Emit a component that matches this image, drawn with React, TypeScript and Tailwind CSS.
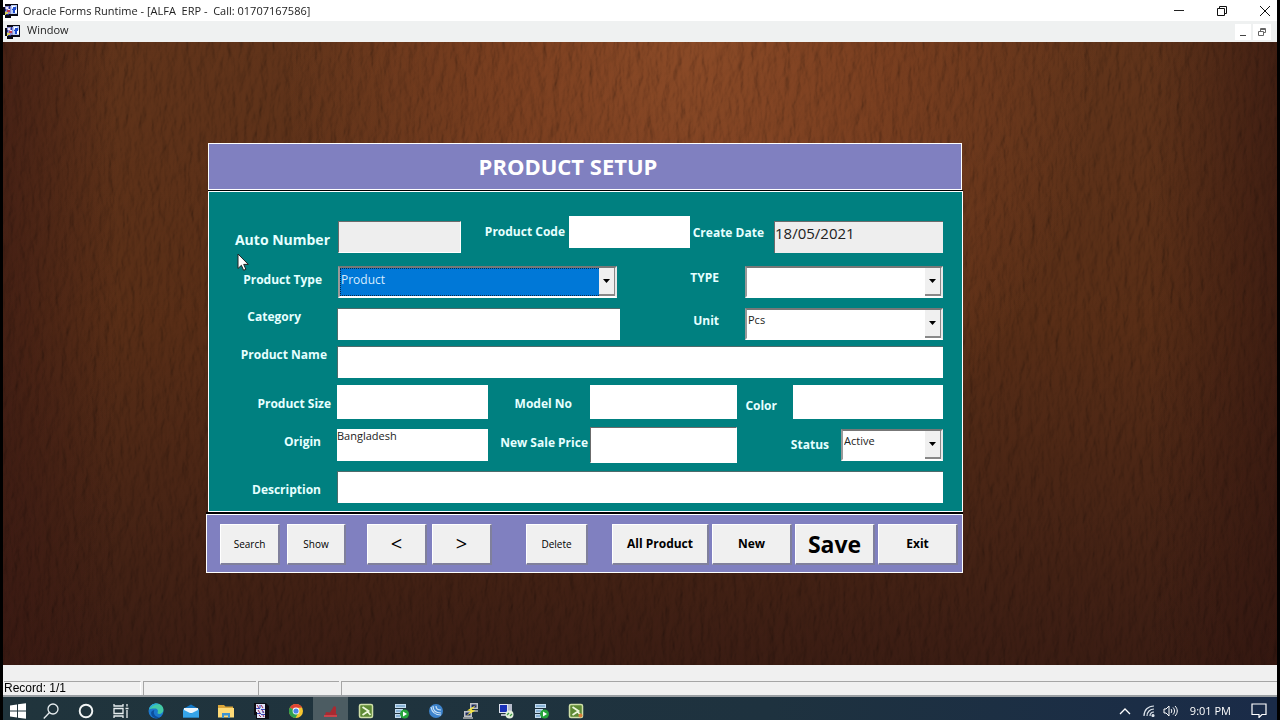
import React, { useState } from 'react';

const sunken = 'border border-t-[#6b6b6b] border-l-[#6b6b6b] border-b-white border-r-white';
const labelText = 'text-[12px] leading-[18px] font-bold text-[#e6ffff] whitespace-nowrap text-right shrink-0';

type FieldProps = {
  id: string;
  label: string;
  labelClass: string;
  inputClass: string;
  className?: string;
  value?: string;
  readOnly?: boolean;
};

function Field({ id, label, labelClass, inputClass, className = 'items-center', value = '', readOnly }: FieldProps) {
  const [text, setText] = useState(value);
  return (
    <div className={`flex ${className}`}>
      <label htmlFor={id} className={`${labelText} ${labelClass}`}>
        {label}
      </label>
      <input
        id={id}
        type="text"
        value={text}
        readOnly={readOnly}
        onChange={(e) => setText(e.target.value)}
        className={`min-w-0 rounded-none text-[#222] outline-none ${inputClass}`}
      />
    </div>
  );
}

type SelectFieldProps = {
  id: string;
  label: string;
  labelClass: string;
  boxClass: string;
  className?: string;
  options: string[];
  highlighted?: boolean;
};

function SelectField({ id, label, labelClass, boxClass, className = 'items-center', options, highlighted }: SelectFieldProps) {
  const [selected, setSelected] = useState(options[0]);
  return (
    <div className={`flex ${className}`}>
      <label htmlFor={id} className={`${labelText} ${labelClass}`}>
        {label}
      </label>
      <div className={`relative border-2 border-t-[#777] border-l-[#999] border-b-white border-r-[#e8e8e8] bg-white ${boxClass}`}>
        <select
          id={id}
          value={selected}
          onChange={(e) => setSelected(e.target.value)}
          className={`block h-full w-full appearance-none rounded-none outline-none ${
            highlighted
              ? 'border border-dotted border-[#0b2a4a] bg-[#0078d7] pb-1 text-[12px] text-[#d6ecff]'
              : 'bg-white pl-px pb-2 text-[11px] text-[#222]'
          }`}
        >
          {options.map((option) => (
            <option key={option} value={option}>
              {option}
            </option>
          ))}
        </select>
        <span className="pointer-events-none absolute top-0 right-0 bottom-0 flex w-4 items-center justify-center border-r border-b-2 border-[#888] bg-[#f0f0f0]">
          <svg viewBox="0 0 7 4" className="h-1 w-[7px]">
            <path d="M0 0h7L3.500 4z" fill="#000" />
          </svg>
        </span>
      </div>
    </div>
  );
}

function FormButton({ children, className }: { children: React.ReactNode; className: string }) {
  return (
    <button
      type="button"
      className={`h-[41px] shrink-0 border border-t-white border-l-white border-b-2 border-r-2 border-b-[#80809c] border-r-[#80809c] bg-[#f0f0f0] whitespace-nowrap text-black ${className}`}
    >
      {children}
    </button>
  );
}

function FormsIcon() {
  return (
    <svg viewBox="0 0 16 16" className="h-4 w-4 shrink-0">
      <path d="M2 1h13v12H8v2H2v-3H0V4h2z" fill="#090914" />
      <path d="M2 3h6v8H2z" fill="#8d8fcf" />
      <path d="M8 2h6v9H8z" fill="#b9cdf8" />
      <path d="M9 3h3v2H9zM12 6h2v4h-2z" fill="#fff" />
      <path d="M10 4h3v3h-1v3h-2V7H9V6h1z" fill="#1b4bd0" />
      <path d="M3 4h2v2H3zM5 6h2v2H5z" fill="#f3e9f5" />
      <path d="M4 7h3v2H4z" fill="#c33c56" />
      <path d="M2 9h3v3H2z" fill="#d9d25a" />
      <path d="M6 3h1v3H6zM3 11h3v1H3zM2 6h1v2H2z" fill="#2433a5" />
    </svg>
  );
}

function TitleBar() {
  return (
    <header className="flex h-[21px] shrink-0 items-center bg-white">
      <FormsIcon />
      <h1 className="ml-1 grow pt-0.5 text-[11px] whitespace-pre text-[#222]">
        {'Oracle Forms Runtime - [ALFA  ERP -  Call: 01707167586]'}
      </h1>
      <div className="flex gap-[19px]">
        <button type="button" aria-label="Minimize" className="flex w-6 items-center justify-center">
          <svg viewBox="0 0 10 10" className="h-2.5 w-2.5" stroke="#222" fill="none">
            <path d="M0 4.500h10" />
          </svg>
        </button>
        <button type="button" aria-label="Restore" className="flex w-6 items-center justify-center">
          <svg viewBox="0 0 10 10" className="h-2.5 w-2.5" stroke="#111" fill="none">
            <path d="M.5 2.500h7v7h-7zM2.500 2.500v-2h7v7h-2" />
          </svg>
        </button>
        <button type="button" aria-label="Close" className="flex w-6 items-center justify-center">
          <svg viewBox="0 0 10 10" className="h-2.5 w-2.5" stroke="#111" fill="none">
            <path d="M0 0l10 10M10 0L0 10" />
          </svg>
        </button>
      </div>
    </header>
  );
}

function MenuBar() {
  return (
    <nav className="flex h-[21px] shrink-0 items-center bg-[#eff1f1] pl-0.5">
      <FormsIcon />
      <button type="button" className="ml-1.5 pb-0.5 text-[11px] text-[#222]">
        Window
      </button>
      <div className="ml-auto flex h-4 gap-0.5 pr-1.5">
        <button type="button" aria-label="Minimize form" className="flex w-4 items-end justify-center bg-white pb-1">
          <span className="h-px w-1.5 bg-[#444]" />
        </button>
        <button type="button" aria-label="Restore form" className="flex w-[18px] items-center justify-center bg-white">
          <svg viewBox="0 0 8 8" className="h-2 w-2" stroke="#666" fill="none">
            <path d="M.5 3.500h5v4h-5zM2.500 3v-2.500h5v4h-2M2.500 1.500h5" />
          </svg>
        </button>
      </div>
    </nav>
  );
}

function LeatherBackdrop() {
  return (
    <>
      <div className="absolute inset-0 bg-linear-to-b from-[#5a3018] via-[#522a14] via-45% to-[#361a11]" />
      <div className="absolute inset-0 bg-[radial-gradient(ellipse_32%_75%_at_54%_0%,#824524_0%,#763c1ecc_50%,transparent_100%)]" />
      <div className="absolute inset-0 bg-[linear-gradient(to_right,#341510a0_0%,transparent_9%,transparent_90%,#2c120da0_100%)]" />
      <svg className="absolute inset-0 h-full w-full opacity-30 mix-blend-overlay" aria-hidden="true">
        <filter id="grain" x="0" y="0" width="100%" height="100%">
          <feTurbulence type="fractalNoise" baseFrequency="0.13 0.05" numOctaves="4" seed="7" result="noise" />
          <feDiffuseLighting in="noise" surfaceScale="3" lightingColor="#a2a2a2">
            <feDistantLight azimuth="20" elevation="50" />
          </feDiffuseLighting>
        </filter>
        <rect width="100%" height="100%" filter="url(#grain)" />
      </svg>
    </>
  );
}

function ProductForm() {
  return (
    <form className="relative w-[757px] max-w-full" onSubmit={(e) => e.preventDefault()}>
      <div className="mx-px ml-0.5 flex h-[47px] items-center justify-center border border-white bg-[#8080c0] pr-[34px] pb-0.5">
        <h2 className="text-[22px] leading-7 font-bold text-white">PRODUCT SETUP</h2>
      </div>

      <div className="ml-0.5 border-t border-black">
        <div className="border border-white bg-[#008080] pt-6 pb-2 pr-[19px]">
          <div className="flex h-[37px]">
            <Field id="auto-number" label="Auto Number" readOnly className="items-end self-end"
              labelClass="w-[129px] pr-2 pb-1 text-[14px]" inputClass={`h-8 w-[123px] bg-[#eee] ${sunken}`} />
            <Field id="product-code" label="Product Code" className="items-center self-start"
              labelClass="w-[108px] pr-1" inputClass="h-8 w-[121px] bg-white" />
            <Field id="create-date" label="Create Date" value="18/05/2021" readOnly className="grow items-center self-end"
              labelClass="w-[84px] pr-2.5 pb-2" inputClass="h-8 w-full grow border-t border-l border-[#6b6b6b] bg-[#eee] pb-2.5 text-[15px]" />
          </div>

          <div className="mt-3 flex h-[33px]">
            <SelectField id="product-type" label="Product Type" highlighted options={['Product', 'Service']}
              labelClass="w-[129px] pr-4 pb-1" boxClass="h-8 w-[279px]" />
            <SelectField id="type" label="TYPE" options={['', 'Local', 'Import']} className="grow items-center"
              labelClass="w-[128px] pr-[26px] pb-2" boxClass="h-8 grow" />
          </div>

          <div className="mt-2.5 flex h-8">
            <Field id="category" label="Category" className="items-start"
              labelClass="w-[128px] pr-9" inputClass="h-8 w-[283px] border-t border-l border-[#4d6b6b] bg-white" />
            <SelectField id="unit" label="Unit" options={['Pcs', 'Box', 'Kg']} className="grow items-center"
              labelClass="w-[125px] pr-[26px] pb-1.5" boxClass="h-8 grow" />
          </div>

          <div className="mt-1.5">
            <Field id="product-name" label="Product Name" className="items-start"
              labelClass="w-[128px] pr-2.5" inputClass="h-8 grow border-t border-l border-[#4d6b6b] bg-white" />
          </div>

          <div className="mt-1.5 flex h-[35px]">
            <Field id="product-size" label="Product Size" labelClass="w-[128px] pt-1 pr-1.5" inputClass="h-[34px] w-[151px] bg-white" />
            <Field id="model-no" label="Model No" labelClass="w-[102px] pt-1 pr-[18px]" inputClass="h-[34px] w-[147px] bg-white" />
            <Field id="color" label="Color" className="grow items-center"
              labelClass="w-14 pt-2 pr-4" inputClass="h-[34px] grow w-full bg-white" />
          </div>

          <div className="mt-2 flex h-9">
            <Field id="origin" label="Origin" value="Bangladesh"
              labelClass="w-[128px] pr-4 pb-1.5" inputClass="h-8 w-[151px] bg-white pb-5 text-[11px]" />
            <Field id="sale-price" label="New Sale Price"
              labelClass="w-[102px] pr-0.5 pb-1" inputClass={`h-9 w-[147px] bg-white ${sunken}`} />
            <SelectField id="status" label="Status" options={['Active', 'Inactive']} className="grow items-center"
              labelClass="w-[104px] pr-3" boxClass="h-8 grow" />
          </div>

          <div className="mt-2">
            <Field id="description" label="Description"
              labelClass="w-[128px] pt-1.5 pr-4" inputClass="h-8 grow border-t border-l border-[#4d6b6b] bg-white" />
          </div>
        </div>
      </div>

      <div className="border-t-2 border-black">
        <div className="flex h-[59px] items-center border border-white bg-[#8080c0] pt-0.5 pr-1 pl-[13px]">
          <div className="flex gap-[7px]">
            <FormButton className="w-[60px] text-[10px]">Search</FormButton>
            <FormButton className="w-[59px] text-[10px]">Show</FormButton>
          </div>
          <div className="ml-[21px] flex gap-[5px]">
            <FormButton className="w-[60px] text-[20px]">&lt;</FormButton>
            <FormButton className="w-[60px] text-[20px]">&gt;</FormButton>
          </div>
          <FormButton className="ml-[34px] w-[62px] text-[10px]">Delete</FormButton>
          <div className="ml-auto flex gap-[3px] text-[12px] font-bold">
            <FormButton className="w-[97px]">All Product</FormButton>
            <FormButton className="w-20">New</FormButton>
            <FormButton className="w-20 text-[23px]">Save</FormButton>
            <FormButton className="w-20">Exit</FormButton>
          </div>
        </div>
      </div>

      <svg viewBox="0 0 12 19" className="pointer-events-none absolute top-[110px] left-[31px] h-[19px] w-3">
        <path d="M1 1v14.500l3.400-3.200 2.200 5 2.300-1-2.200-4.900h4.600z" fill="#fff" stroke="#222" strokeWidth="1" />
      </svg>
    </form>
  );
}

function StatusBar() {
  const cell = 'border-t border-l border-[#a5a5a5]';
  return (
    <footer className="h-8 shrink-0 border-b-2 border-[#9a9fa3] bg-[#f0f0f0] pt-4">
      <div className="flex h-[14px] gap-0.5 pl-px font-['Liberation_Sans',sans-serif] text-[12px] leading-[13px]">
        <div className="w-[137px] border-t border-r border-[#a5a5a5] border-r-white">Record: 1/1</div>
        <div className={`w-[113px] ${cell}`} />
        <div className={`w-[81px] ${cell}`} />
        <div className={`grow ${cell}`} />
      </div>
    </footer>
  );
}

function ArrowAppIcon({ dot }: { dot?: boolean }) {
  return (
    <>
      <rect x="1.500" y="1.500" width="13" height="13" rx="1.500" fill="#5e8a35" stroke="#cfe0a8" strokeWidth="1.500" />
      <path d="M4.500 4l6 4-6 4M9.500 8.500l3 3.500" stroke="#eef7dc" strokeWidth="1.800" fill="none" />
      {dot && <circle cx="12.500" cy="12.500" r="2" fill="#d9803a" />}
    </>
  );
}

function ServerPlayIcon() {
  return (
    <>
      <path d="M2 1h11v4H2zM2 6h8v4H2zM2 11h6v4H2z" fill="#c4dcf0" />
      <path d="M3 3h9M3 8h5M3 13h4" stroke="#4d87b8" />
      <circle cx="11.500" cy="11" r="4.500" fill="#25a63c" />
      <path d="M10 8.500v5l4-2.500z" fill="#fff" />
    </>
  );
}

const taskbarItems: { name: string; icon: React.ReactNode; active?: boolean }[] = [
  { name: 'Start', icon: <path d="M0 2.500l7-1v6H0zM8 1.300L16 .2v7.300H8zM0 8.500h7v6l-7-1zM8 8.500h8v7.300l-8-1.100z" fill="#fff" /> },
  {
    name: 'Search',
    icon: <g fill="none" stroke="#e8eef0" strokeWidth="1.300"><circle cx="10" cy="6" r="5" /><path d="M6.500 9.500L.8 15.500" /></g>,
  },
  { name: 'Cortana', icon: <circle cx="8" cy="8" r="6.300" fill="none" stroke="#f2f5f5" strokeWidth="1.900" /> },
  {
    name: 'Task View',
    icon: <path d="M1 1v2h9V1M1 5.500h9v5H1zM1 15v-2h9v2M14 1v2.500M14 7v8M12.500 5.500h3" fill="none" stroke="#e8eef0" strokeWidth="1.300" />,
  },
  {
    name: 'Edge',
    icon: (
      <>
        <circle cx="8" cy="8" r="7.500" fill="#1b78cf" />
        <path d="M1 6.500C2 2.500 5 .5 8.500.5c4.500 0 7 3.200 7 6.300 0 2.700-2 4.200-4.300 4.200-1.600 0-2-.8-1.500-1.700.8-1.500-.3-3.700-3-3.700C4 5.600 2 6 1 6.500z" fill="#43c9a5" />
        <path d="M1 6.500C2 2.500 5 .5 8.500.5c1 0 2 .2 3 .7C7 1.200 3.500 3 1 6.500z" fill="#2ba6dd" />
        <path d="M6.500 7c-2 3 .5 7.500 5.500 7.300-4.500 3-9.500-.8-8.800-5C3.500 8 5 7 6.500 7z" fill="#0d4f9e" />
      </>
    ),
  },
  {
    name: 'Mail',
    icon: <><path d="M0 6l8-4.500L16 6v8.500H0z" fill="#1479c7" /><path d="M1 5h14v5H1z" fill="#e9f5fc" /><path d="M0 6.500l8 4 8-4v8H0z" fill="#35a5ea" /></>,
  },
  {
    name: 'File Explorer',
    icon: <><path d="M0 2h6l1.500 1.500H15V14H0z" fill="#dba63a" /><path d="M0 5h16v9.500H0z" fill="#ffdb77" /><path d="M4 15v-5h8v5h-2v-2.500H6V15z" fill="#3e94d1" /></>,
  },
  {
    name: 'Forms Builder',
    icon: (
      <>
        <path d="M1 0h12l3 3v13H3V12H1z" fill="#0c0c12" />
        <path d="M3 1h9v14H4V9H3z" fill="#dfe4f5" />
        <path d="M4 2l2 3M8 2l2 3M5 7l2 3M9 7l2 3M6 12l2 2M10 12l1 2" stroke="#a02a5c" />
        <path d="M3 5.500h4M8 6.500h4M4 10.500h4M8 11.500h4M7 2v3M10 8v2" stroke="#3746b8" />
      </>
    ),
  },
  {
    name: 'Chrome',
    icon: (
      <>
        <circle cx="8" cy="8" r="7" fill="#f7c630" />
        <path d="M8 8L1.900 4.500A7 7 0 0 1 14.100 4.500L8 5z" fill="#df4335" />
        <path d="M1.900 4.500A7 7 0 0 0 7.500 15l3-5.500L8 8z" fill="#2fa14f" />
        <circle cx="8" cy="8" r="3.400" fill="#fff" />
        <circle cx="8" cy="8" r="2.600" fill="#4a86e8" />
      </>
    ),
  },
  { name: 'Forms Runtime', active: true, icon: <><path d="M3 9l4 .5L11 3l2 1v7l2 1H2z" fill="#a82a31" /><path d="M1 12h13v2H1z" fill="#c9444b" /></> },
  { name: 'Navigator', icon: <ArrowAppIcon /> },
  { name: 'Start Server', icon: <ServerPlayIcon /> },
  {
    name: 'SQL Client',
    icon: <><circle cx="8" cy="8" r="7" fill="#3d83cb" /><path d="M3 4c1 6 4 8 10 8M5 3c0 5 3 7 8 7M8 3c0 3 2 4 5 4" fill="none" stroke="#c9e2f7" strokeWidth="1.200" /></>,
  },
  {
    name: 'PuTTY',
    icon: (
      <>
        <path d="M7 0h8v6H7zM1 8h8v6H1z" fill="#bfc3c6" />
        <path d="M8.500 1.500h5v3h-5zM2.500 9.500h5v3h-5z" fill="#1f2c64" />
        <path d="M8 7h7v2H8zM0 14h10v2H0z" fill="#8d9295" />
        <path d="M13 2L4 7.500l4 .5-5 5 9.500-5.500L8.500 7z" fill="#f4e43c" />
      </>
    ),
  },
  {
    name: 'Remote Desktop',
    icon: (
      <>
        <path d="M1 1h9v9H1z" fill="#dfe3ee" />
        <path d="M2 2h7v7H2z" fill="#1930b8" />
        <path d="M10 1h4v9h-4zM3 11h6v2H3z" fill="#b7bccb" />
        <circle cx="11.500" cy="11.500" r="4" fill="#e3efdc" />
        <path d="M9 12l2-2M12 13l2-2" stroke="#3f9a41" strokeWidth="1.300" />
      </>
    ),
  },
  { name: 'Stop Server', icon: <ServerPlayIcon /> },
  { name: 'Navigator 2', icon: <ArrowAppIcon dot /> },
];

function Taskbar() {
  return (
    <nav className="flex h-[23px] shrink-0 items-stretch bg-linear-to-r from-[#20343c] via-[#1e323f] via-60% to-[#1a2b48] text-white">
      {taskbarItems.map((item) => (
        <button
          key={item.name}
          type="button"
          aria-label={item.name}
          className={`flex w-[35px] shrink-0 items-center justify-center pt-1 first:w-[30px] ${item.active ? 'bg-[#4c5c62]' : ''}`}
        >
          <svg viewBox="0 0 16 16" className="h-4 w-4">
            {item.icon}
          </svg>
        </button>
      ))}
      <div className="ml-auto flex items-center pt-1 pr-2.5">
        <svg viewBox="0 0 12 8" className="mr-3 h-2 w-3" fill="none" stroke="#fff" strokeWidth="1.300">
          <path d="M1 7l5-5 5 5" />
        </svg>
        <svg viewBox="0 0 12 12" className="mr-2 h-3 w-3" fill="none" stroke="#dbe2ea" strokeWidth="1.200">
          <path d="M1 11C1 5 5 1 11 1M4 11c0-4 3-7 7-7M7 11c0-2.500 1.500-4 4-4" />
          <circle cx="10" cy="10.500" r="1" fill="#fff" />
        </svg>
        <svg viewBox="0 0 15 12" className="mr-3 h-3 w-[15px]" fill="none" stroke="#fff">
          <path d="M1 4h2l3-3v10L3 8H1zM8 4c1 1 1 3 0 4M10 2.500c2 2 2 5 0 7M12 1c3 3 3 7 0 10" />
        </svg>
        <time className="mr-5 text-[11px] leading-4 whitespace-nowrap">9:01 PM</time>
        <button type="button" aria-label="Notifications">
          <svg viewBox="0 0 16 15" className="block h-[15px] w-4" fill="none" stroke="#fff" strokeWidth="1.200">
            <path d="M1 1h14v10.500h-4L8 14.500 8 11.500H1z" />
          </svg>
        </button>
      </div>
    </nav>
  );
}

export default function App() {
  return (
    <div className="flex h-screen flex-col overflow-hidden border-x-[3px] border-black bg-black font-['Open_Sans','Noto_Sans',sans-serif]">
      <TitleBar />
      <MenuBar />
      <main className="relative min-h-0 grow overflow-hidden pt-[101px] pl-[203px]">
        <LeatherBackdrop />
        <ProductForm />
      </main>
      <StatusBar />
      <Taskbar />
    </div>
  );
}
